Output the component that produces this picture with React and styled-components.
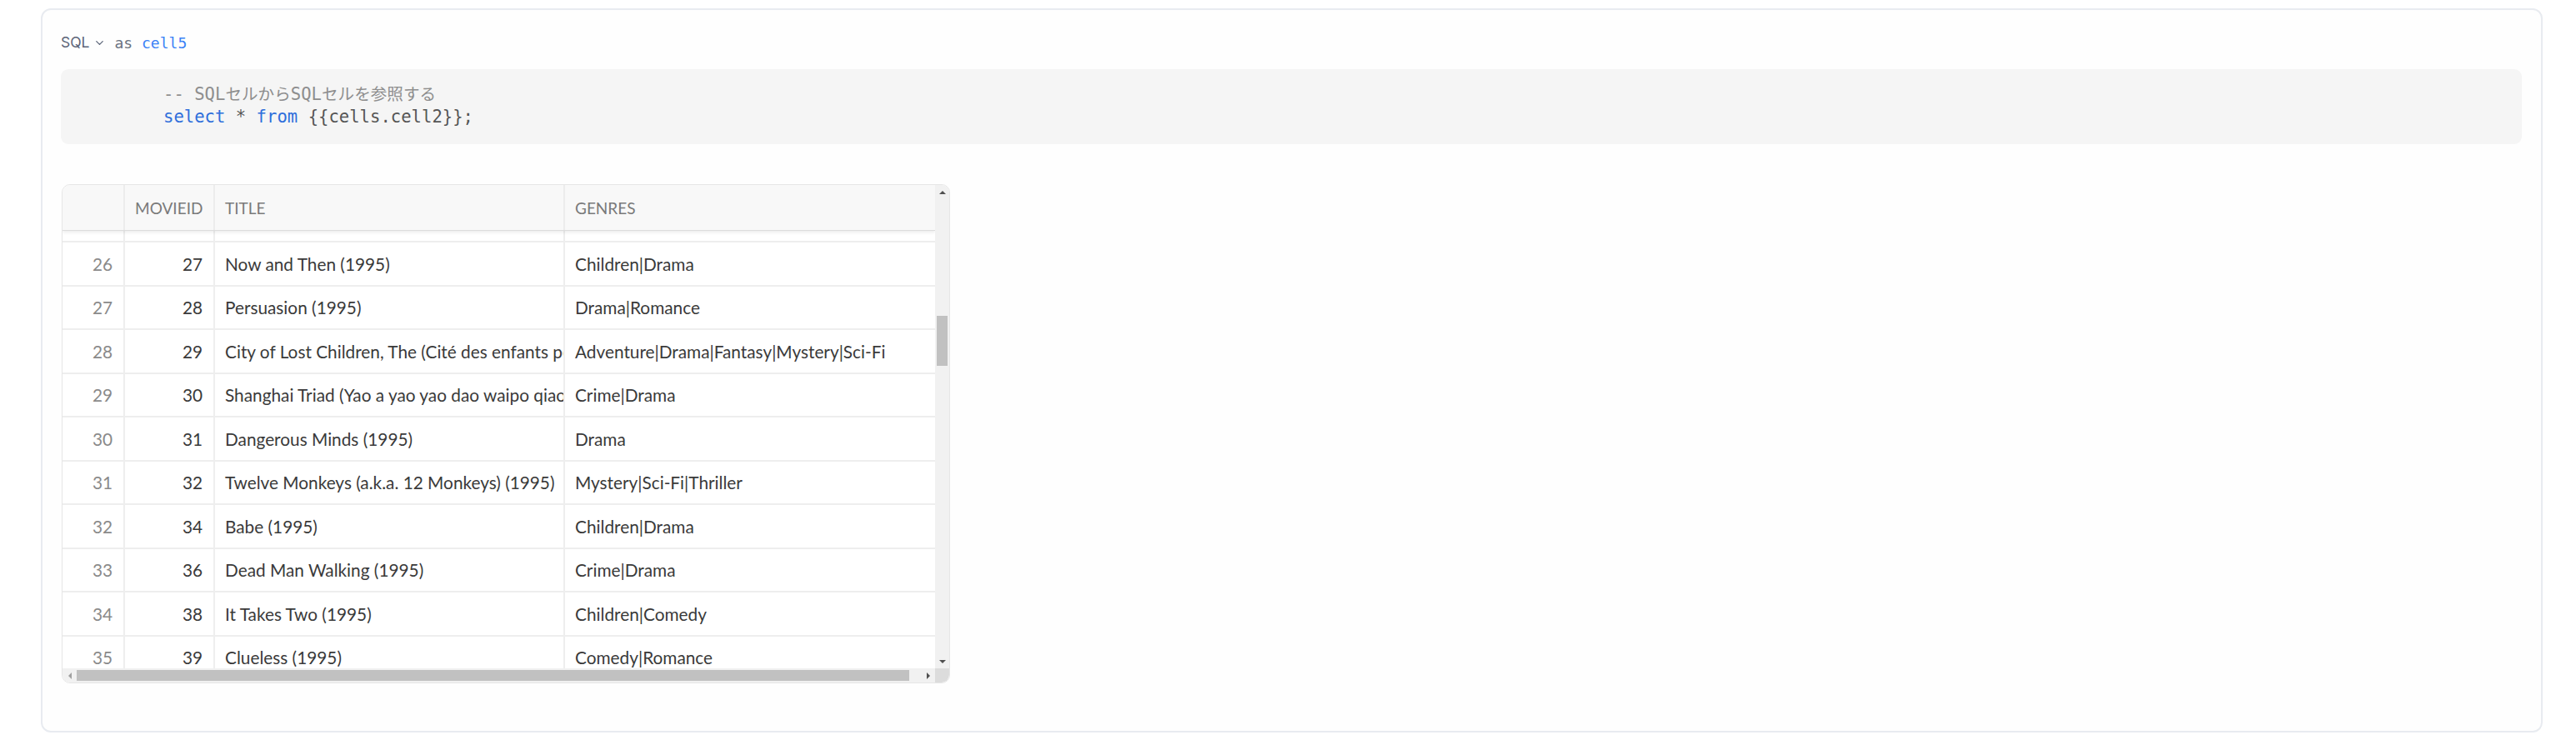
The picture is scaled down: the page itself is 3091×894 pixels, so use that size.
import React from "react";
import styled, { createGlobalStyle } from "styled-components";
import { ChevronDown } from "lucide-react";

const GlobalStyle = createGlobalStyle`
  body {
    margin: 0;
    background: #ffffff;
    font-family: Inter, "Noto Sans", sans-serif;
  }
`;

const ROW_H = 52.5;
const SCROLL_OFFSET = 38.5;

const rows = [
  [25, 26, "Othello (1995)", "Drama"],
  [26, 27, "Now and Then (1995)", "Children|Drama"],
  [27, 28, "Persuasion (1995)", "Drama|Romance"],
  [28, 29, "City of Lost Children, The (Cité des enfants perdus, La) (1995)", "Adventure|Drama|Fantasy|Mystery|Sci-Fi"],
  [29, 30, "Shanghai Triad (Yao a yao yao dao waipo qiao) (1995)", "Crime|Drama"],
  [30, 31, "Dangerous Minds (1995)", "Drama"],
  [31, 32, "Twelve Monkeys (a.k.a. 12 Monkeys) (1995)", "Mystery|Sci-Fi|Thriller"],
  [32, 34, "Babe (1995)", "Children|Drama"],
  [33, 36, "Dead Man Walking (1995)", "Crime|Drama"],
  [34, 38, "It Takes Two (1995)", "Children|Comedy"],
  [35, 39, "Clueless (1995)", "Comedy|Romance"],
];

const Page = styled.div`
  padding: 10px 40px 15px 49px;
`;

const Card = styled.section`
  border: 2px solid #e8ebf0;
  border-radius: 12px;
  padding: 28px 23px 57px 22px;
  background: #fefefe;
`;

const CellHeader = styled.div`
  display: flex;
  align-items: center;
  height: 22px;
  color: #5b6478;
`;

const LangLabel = styled.span`
  font-family: Inter, sans-serif;
  font-size: 17.5px;
  line-height: 22px;
`;

const Chevron = styled(ChevronDown)`
  margin: 1px 11px 0 4px;
`;

const Alias = styled.span`
  font-family: "DejaVu Sans Mono", monospace;
  font-size: 18px;
  color: #6b7280;
  white-space: pre;
  span {
    color: #3b82f6;
  }
`;

const CodeBox = styled.pre`
  margin: 21px 0 0;
  padding: 17px 0 19px 123px;
  background: #f5f5f5;
  border-radius: 9px;
  font-family: "DejaVu Sans Mono", "Noto Sans CJK JP", monospace;
  font-size: 20.6px;
  line-height: 27px;
  color: #555555;
`;

const CodeLine = styled.div`
  height: 27px;
  overflow: visible;
`;

const Comment = styled.span`
  color: #8e8e8e;
`;

const Jp = styled.span`
  font-family: "Noto Sans CJK JP", sans-serif;
  font-size: 19.6px;
  line-height: 1;
`;

const Keyword = styled.span`
  color: #2f6fdb;
`;

const TableFrame = styled.div`
  margin: 48px 0 0 1px;
  width: 1066px;
  height: 599px;
  border: 1px solid #e6e6e6;
  border-radius: 10px;
  overflow: hidden;
  display: flex;
  flex-direction: column;
  box-sizing: border-box;
  font-family: Lato, "Open Sans", sans-serif;
  font-size: 20.8px;
`;

const TopPart = styled.div`
  flex: 1;
  display: flex;
  min-height: 0;
`;

const Viewport = styled.div`
  flex: 1;
  overflow: hidden;
  display: flex;
  flex-direction: column;
  min-width: 0;
`;

const cols = "75px 108px 420px 462px";

const HeaderRow = styled.div`
  display: grid;
  grid-template-columns: ${cols};
  height: 54px;
  flex: none;
  background: #f8f8f8;
  border-bottom: 1px solid #dcdcdc;
  box-shadow: 0 2px 4px rgba(0, 0, 0, 0.08);
  position: relative;
  z-index: 1;
  font-size: 19px;
`;

const HeadCell = styled.div`
  display: flex;
  align-items: center;
  padding: 0 12px;
  color: #7a7a7a;
  border-right: 2px solid #ececec;
  white-space: nowrap;
  overflow: hidden;
`;

const Body = styled.div`
  flex: 1;
  overflow: hidden;
`;

const BodyInner = styled.div`
  margin-top: ${({ $offset }) => -$offset}px;
`;

const Row = styled.div`
  display: grid;
  grid-template-columns: ${cols};
  height: ${ROW_H}px;
  border-bottom: 2px solid #eeeeee;
  box-sizing: border-box;
  background: #ffffff;
`;

const Cell = styled.div`
  display: flex;
  align-items: center;
  justify-content: ${({ $num }) => ($num ? "flex-end" : "flex-start")};
  padding: ${({ $num }) => ($num ? "0 13px 0 12px" : "0 12px")};
  color: ${({ $muted }) => ($muted ? "#8a8a8a" : "#3a3a3a")};
  border-right: 2px solid #eeeeee;
  white-space: nowrap;
  overflow: hidden;
`;

const VScroll = styled.div`
  width: 17px;
  flex: none;
  background: #f1f1f1;
  display: flex;
  flex-direction: column;
`;

const ScrollButton = styled.div`
  width: 17px;
  height: 17px;
  flex: none;
  display: flex;
  align-items: center;
  justify-content: center;
`;

const Arrow = styled.span`
  width: 0;
  height: 0;
  border-style: solid;
  ${({ $dir }) =>
    $dir === "up"
      ? "border-width: 0 4px 4px 4px; border-color: transparent transparent #505050 transparent;"
      : $dir === "down"
      ? "border-width: 4px 4px 0 4px; border-color: #505050 transparent transparent transparent;"
      : $dir === "left"
      ? "border-width: 4px 4px 4px 0; border-color: transparent #a0a0a0 transparent transparent;"
      : "border-width: 4px 0 4px 4px; border-color: transparent transparent transparent #505050;"}
`;

const VTrack = styled.div`
  flex: 1;
  padding: 0 2px;
`;

const VThumb = styled.div`
  height: 60px;
  background: #c1c1c1;
`;

const HScrollRow = styled.div`
  height: 17px;
  flex: none;
  display: flex;
  background: #f1f1f1;
`;

const HTrack = styled.div`
  flex: 1;
  padding: 2px 0;
  display: flex;
`;

const HThumb = styled.div`
  height: 13px;
  background: #c1c1c1;
`;

const Corner = styled.div`
  width: 17px;
  background: #dcdcdc;
  border-bottom-right-radius: 9px;
`;

const App = () => {
  return (
    <Page>
      <GlobalStyle />
      <Card>
        <CellHeader>
          <LangLabel>SQL</LangLabel>
          <Chevron size={15} strokeWidth={2} />
          <Alias>
            as <span>cell5</span>
          </Alias>
        </CellHeader>
        <CodeBox>
          <CodeLine>
            <Comment>
              -- SQL<Jp>セルから</Jp>SQL<Jp>セルを参照する</Jp>
            </Comment>
          </CodeLine>
          <CodeLine>
            <Keyword>select</Keyword> * <Keyword>from</Keyword> {"{{cells.cell2}};"}
          </CodeLine>
        </CodeBox>

        <TableFrame>
          <TopPart>
            <Viewport>
              <HeaderRow>
                <HeadCell />
                <HeadCell>MOVIEID</HeadCell>
                <HeadCell>TITLE</HeadCell>
                <HeadCell>GENRES</HeadCell>
              </HeaderRow>
              <Body>
                <BodyInner $offset={SCROLL_OFFSET}>
                  {rows.map(([idx, id, title, genres]) => (
                    <Row key={idx}>
                      <Cell $num $muted>
                        {idx}
                      </Cell>
                      <Cell $num>{id}</Cell>
                      <Cell>{title}</Cell>
                      <Cell>{genres}</Cell>
                    </Row>
                  ))}
                </BodyInner>
              </Body>
            </Viewport>
            <VScroll>
              <ScrollButton>
                <Arrow $dir="up" />
              </ScrollButton>
              <VTrack>
                <VThumb style={{ marginTop: 140 }} />
              </VTrack>
              <ScrollButton>
                <Arrow $dir="down" />
              </ScrollButton>
            </VScroll>
          </TopPart>
          <HScrollRow>
            <ScrollButton>
              <Arrow $dir="left" />
            </ScrollButton>
            <HTrack>
              <HThumb style={{ width: 999 }} />
            </HTrack>
            <ScrollButton>
              <Arrow $dir="right" />
            </ScrollButton>
            <Corner />
          </HScrollRow>
        </TableFrame>
      </Card>
    </Page>
  );
};

export default App;
